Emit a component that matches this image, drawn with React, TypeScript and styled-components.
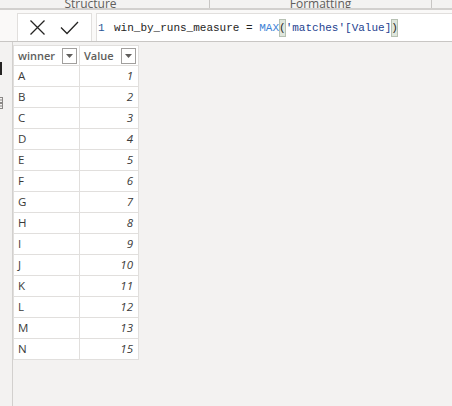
import styled, { createGlobalStyle } from 'styled-components';

const rows: [string, number][] = [
	['A', 1], ['B', 2], ['C', 3], ['D', 4], ['E', 5], ['F', 6], ['G', 7],
	['H', 8], ['I', 9], ['J', 10], ['K', 11], ['L', 12], ['M', 13], ['N', 15],
];

const GlobalStyle = createGlobalStyle`
	html, body {
		margin: 0;
		padding: 0;
		background: #f3f2f1;
		overflow: hidden;
	}
	body {
		font-family: "Open Sans", "Noto Sans", Arial, sans-serif;
		width: 452px;
		height: 406px;
	}
`;

const FilterIcon = () => (
	<svg width="7" height="4" viewBox="0 0 7 4">
		<path d="M0 0 L7 0 L3.5 4 Z" fill="#605e5c" />
	</svg>
);

const GridGlyph = () => (
	<svg width="6" height="6" viewBox="0 0 6 6">
		<rect x="0.5" y="0.5" width="5" height="5" fill="none" stroke="#8a8886" />
		<line x1="0.5" y1="3" x2="5.5" y2="3" stroke="#8a8886" />
	</svg>
);

const App = () => {
	return (
		<Page>
			<GlobalStyle />
			<RibbonLabels>
				<RibbonGroup width={210} shift={28}><span>Structure</span></RibbonGroup>
				<RibbonGroup width={222} shift={0}><span>Formatting</span></RibbonGroup>
			</RibbonLabels>
			<FormulaBar>
				<CommitBox>
					<svg width="17" height="17" viewBox="0 0 17 17">
						<path d="M1.5 1.5 L15.5 15.5 M15.5 1.5 L1.5 15.5" stroke="#252423" strokeWidth="1.3" fill="none" />
					</svg>
					<svg width="19" height="14" viewBox="0 0 19 14">
						<path d="M1 6.5 L7 12.5 L18 1" stroke="#252423" strokeWidth="1.3" fill="none" />
					</svg>
				</CommitBox>
				<FormulaInput>
					<LineNo>1</LineNo>
					<Code>
						win_by_runs_measure = <Fn>MAX</Fn><Paren>(</Paren><Ref>'matches'[Value]</Ref><Paren>)</Paren>
					</Code>
				</FormulaInput>
			</FormulaBar>
			<Main>
				<SideRail>
					<RailMarker />
					<RailIcons>
						<GridGlyph />
						<GridGlyph />
					</RailIcons>
				</SideRail>
				<TableArea>
					<DataTable>
						<thead>
							<tr>
								<HeadCell width={66}>
									<HeadInner>winner<FilterButton><FilterIcon /></FilterButton></HeadInner>
								</HeadCell>
								<HeadCell width={59}>
									<HeadInner>Value<FilterButton><FilterIcon /></FilterButton></HeadInner>
								</HeadCell>
							</tr>
						</thead>
						<tbody>
							{rows.map(([w, v]) => (
								<tr key={w}>
									<Cell>{w}</Cell>
									<Cell numeric>{v}</Cell>
								</tr>
							))}
						</tbody>
					</DataTable>
				</TableArea>
			</Main>
		</Page>
	);
};

const Page = styled.div`
	display: flex;
	flex-direction: column;
	width: 452px;
	height: 406px;
`;

const RibbonLabels = styled.div`
	display: flex;
	height: 8px;
	background: #f3f2f1;
	border-bottom: 2px solid #d2d0ce;
`;

const RibbonGroup = styled.div<{ width: number; shift: number }>`
	flex: 0 0 ${p => p.width}px;
	display: flex;
	justify-content: center;
	align-items: flex-end;
	overflow: hidden;
	padding-right: ${p => p.shift}px;
	box-sizing: border-box;
	border-right: 1px solid #c8c6c4;
	span {
		font-size: 12px;
		line-height: 16px;
		color: #605e5c;
		margin-bottom: -4px;
		white-space: nowrap;
	}
`;

const FormulaBar = styled.div`
	display: flex;
	align-items: stretch;
	gap: 4px;
	height: 28px;
	padding: 3px 0 0 17px;
	background: #faf9f8;
	border-bottom: 1px solid #c8c6c4;
`;

const CommitBox = styled.div`
	flex: 0 0 75px;
	box-sizing: border-box;
	display: flex;
	align-items: center;
	justify-content: center;
	gap: 14px;
	padding-right: 2px;
	background: #ffffff;
	border: 1px solid #e1dfdd;
	border-bottom: none;
`;

const FormulaInput = styled.div`
	flex: 1;
	display: flex;
	align-items: center;
	padding-left: 1px;
	background: #ffffff;
	border: 1px solid #e1dfdd;
	border-right: none;
	border-bottom: none;
	font-family: "Liberation Mono", "DejaVu Sans Mono", monospace;
	font-size: 11px;
	white-space: pre;
`;

const LineNo = styled.span`
	color: #2b5797;
	width: 16px;
`;

const Code = styled.span`
	color: #252423;
`;

const Fn = styled.span`
	color: #3d7fd6;
`;

const Ref = styled.span`
	color: #1e3f8f;
`;

const Paren = styled.span`
	color: #252423;
	background: #dfe6dc;
	outline: 1px solid #b7c1b3;
	outline-offset: -1px;
	padding: 3px 0;
`;

const Main = styled.div`
	flex: 1;
	display: flex;
	min-height: 0;
`;

const SideRail = styled.div`
	flex: 0 0 12px;
	display: flex;
	flex-direction: column;
	padding-top: 20px;
	border-right: 1px solid #d2d0ce;
	overflow: hidden;
`;

const RailMarker = styled.div`
	width: 2px;
	height: 13px;
	background: #252423;
`;

const RailIcons = styled.div`
	display: flex;
	flex-direction: column;
	margin-top: 22px;
	margin-left: -3px;
`;

const TableArea = styled.div`
	padding-top: 3px;
`;

const DataTable = styled.table`
	border-collapse: collapse;
	background: #ffffff;
	font-size: 11.5px;
`;

const HeadCell = styled.th<{ width: number }>`
	width: ${p => p.width}px;
	height: 20px;
	padding: 0 2px 0 4px;
	border: 1px solid #e1dfdd;
	box-sizing: border-box;
	font-weight: 600;
	font-size: 11px;
	color: #605e5c;
	text-align: left;
`;

const HeadInner = styled.div`
	display: flex;
	align-items: center;
	justify-content: space-between;
`;

const FilterButton = styled.span`
	display: inline-flex;
	align-items: center;
	justify-content: center;
	width: 15px;
	height: 16px;
	box-sizing: border-box;
	background: #ffffff;
	border: 1px solid #a19f9d;
`;

const Cell = styled.td<{ numeric?: boolean }>`
	height: 20px;
	padding: 0 ${p => (p.numeric ? '5px' : '4px')};
	border: 1px solid #e1dfdd;
	color: #3b3a39;
	text-align: ${p => (p.numeric ? 'right' : 'left')};
	font-style: ${p => (p.numeric ? 'italic' : 'normal')};
	line-height: 14px;
`;

export default App;
